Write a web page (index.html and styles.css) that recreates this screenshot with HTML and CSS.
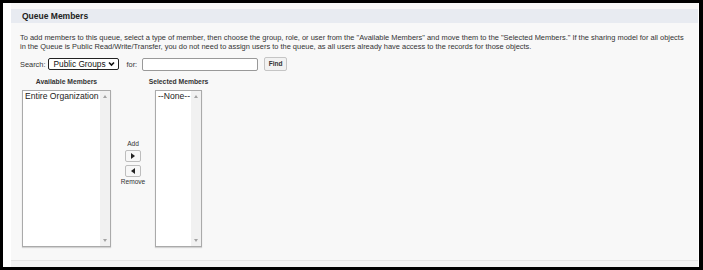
FILE: index.html
```html
<!DOCTYPE html>
<html lang="en">
<head>
    <meta charset="UTF-8">
    <title>Queue Members</title>
    <link rel="stylesheet" href="styles.css">
</head>
<body>
    <div class="frame">
        <div class="panel">
            <div class="panel-header">Queue Members</div>

            <p class="intro">To add members to this queue, select a type of member, then choose the group, role, or user from the "Available Members" and move them to the "Selected Members." If the sharing model for all objects<br>in the Queue is Public Read/Write/Transfer, you do not need to assign users to the queue, as all users already have access to the records for those objects.</p>

            <div class="search-row">
                <label>Search:</label>
                <div class="select-box">
                    <span>Public Groups</span>
                    <svg width="7" height="6" viewBox="0 0 7 6"><path d="M1 1.5 L3.5 4 L6 1.5" fill="none" stroke="#111" stroke-width="1.6"/></svg>
                </div>
                <label class="for-label">for:</label>
                <div class="text-input"></div>
                <div class="btn">Find</div>
            </div>

            <div class="picker">
                <div class="col col-available">
                    <div class="col-title">Available Members</div>
                    <div class="listbox">
                        <div class="list-items">Entire Organization</div>
                        <div class="scroll">
                            <span class="arrow up"></span>
                            <span class="arrow down"></span>
                        </div>
                    </div>
                </div>

                <div class="mover">
                    <div class="mover-label">Add</div>
                    <div class="move-btn"><span class="tri right"></span></div>
                    <div class="move-btn"><span class="tri left"></span></div>
                    <div class="mover-label">Remove</div>
                </div>

                <div class="col col-selected">
                    <div class="col-title">Selected Members</div>
                    <div class="listbox">
                        <div class="list-items">--None--</div>
                        <div class="scroll">
                            <span class="arrow up"></span>
                            <span class="arrow down"></span>
                        </div>
                    </div>
                </div>
            </div>
        </div>
    </div>
</body>
</html>
```

FILE: styles.css
```css
* {
    margin: 0;
    padding: 0;
    box-sizing: border-box;
}

body {
    background: #000;
    font-family: 'Liberation Sans', Arial, sans-serif;
    color: #333;
    width: 703px;
    height: 270px;
    overflow: hidden;
    padding: 3px 4px 3px 3px;
}

.frame {
    background: #fff;
    height: 264px;
    padding: 0 1px 0 8px;
}

.panel {
    background: #f8f8f8;
    height: 264px;
    padding-top: 6px;
    position: relative;
}

.panel::after {
    content: "";
    position: absolute;
    left: 0;
    right: 0;
    bottom: 0;
    height: 6px;
    background: #f3f3f3;
    border-top: 1px solid #e4e4e4;
}

.panel-header {
    background: #e8ebf1;
    height: 14px;
    line-height: 14px;
    padding-left: 11px;
    font-size: 8.5px;
    font-weight: bold;
    color: #222;
}

.intro {
    font-size: 7.45px;
    line-height: 9px;
    padding: 10px 4px 0 9px;
    color: #333;
    white-space: nowrap;
}

.search-row {
    display: flex;
    align-items: center;
    margin-top: 6px;
    padding-left: 9px;
    height: 14px;
    font-size: 7.4px;
}

.select-box {
    display: flex;
    align-items: center;
    justify-content: space-between;
    margin-left: 3px;
    height: 12px;
    width: 71px;
    padding: 0 3px 0 4px;
    border: 1px solid #222;
    border-radius: 2px;
    background: #fff;
    font-size: 8.3px;
    color: #111;
    white-space: nowrap;
}

.for-label {
    margin-left: 7px;
}

.text-input {
    margin-left: 5px;
    width: 116px;
    height: 13px;
    border: 1px solid #999;
    border-radius: 2px;
    background: #fff;
}

.btn {
    margin-left: 6px;
    width: 23px;
    height: 14px;
    line-height: 12px;
    text-align: center;
    border: 1px solid #c5c5c5;
    border-radius: 2px;
    background: #f2f2f2;
    font-size: 6.6px;
    font-weight: bold;
    color: #333;
}

.picker {
    display: flex;
    margin-top: 7px;
    padding-left: 11px;
}

.col-title {
    text-align: center;
    font-size: 6.8px;
    font-weight: bold;
    height: 12px;
    line-height: 8px;
    color: #333;
}

.col-available .listbox {
    width: 89px;
}

.col-selected .listbox {
    width: 47px;
}

.col-selected .col-title {
    white-space: nowrap;
    margin: 0 -10px;
}

.listbox {
    display: flex;
    height: 157px;
    border: 1px solid #aaa;
    background: #fff;
    box-shadow: 0 1px 1px rgba(0, 0, 0, 0.15);
}

.list-items {
    flex: 1;
    font-size: 8.6px;
    line-height: 11px;
    padding-left: 2px;
    color: #222;
    white-space: nowrap;
    overflow: hidden;
}

.scroll {
    width: 10px;
    background: #f1f1f1;
    display: flex;
    flex-direction: column;
    justify-content: space-between;
    align-items: center;
    padding: 4px 0;
}

.arrow {
    width: 0;
    height: 0;
    border-left: 2.5px solid transparent;
    border-right: 2.5px solid transparent;
}

.arrow.up {
    border-bottom: 3px solid #a3a3a3;
}

.arrow.down {
    border-top: 3px solid #a3a3a3;
}

.mover {
    width: 44px;
    display: flex;
    flex-direction: column;
    align-items: center;
    padding-top: 61px;
    font-size: 6.6px;
    color: #333;
}

.mover-label {
    height: 10px;
    line-height: 10px;
}

.move-btn {
    width: 16px;
    height: 12px;
    margin-top: 1px;
    border: 1px solid #bdbdbd;
    border-radius: 2px;
    background: #f7f7f7;
    display: flex;
    align-items: center;
    justify-content: center;
}

.move-btn + .move-btn {
    margin-top: 3px;
}

.tri {
    width: 0;
    height: 0;
    border-top: 3px solid transparent;
    border-bottom: 3px solid transparent;
}

.tri.right {
    border-left: 4px solid #222;
}

.tri.left {
    border-right: 4px solid #222;
}
```
